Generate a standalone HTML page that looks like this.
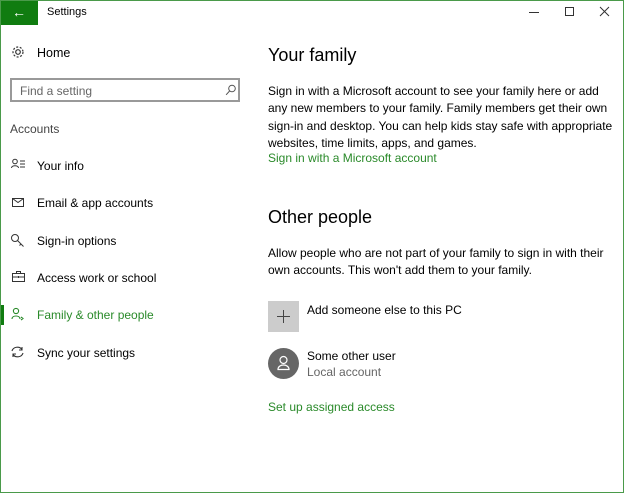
<!DOCTYPE html>
<html><head><meta charset="utf-8"><style>
*{margin:0;padding:0;box-sizing:border-box}
body{width:624px;height:493px;overflow:hidden;background:#fff;font-family:"Liberation Sans",sans-serif;position:relative;color:#000}
.frame{position:absolute;left:0;top:0;width:624px;height:493px;border:1px solid #4a9a4a}
.back{position:absolute;left:0;top:0;width:38px;height:25px;background:#107c10;color:#fff;font-size:14px;text-align:center;line-height:24px}
.title{position:absolute;left:47px;top:6px;font-size:11px}
.t{position:absolute;white-space:nowrap;font-size:12px}
.search{position:absolute;left:10px;top:78px;width:230px;height:24px;border:2px solid #999;}
.search span{position:absolute;left:8px;top:4px;font-size:12px;color:#666}
.green{color:#2a8a2a}
.p{position:absolute;left:268px;font-size:12px;line-height:17.3px;width:350px}
svg{position:absolute}
</style></head><body>
<div class="back">&#8592;</div>
<div class="title">Settings</div>
<svg style="left:520px;top:0" width="100" height="25" fill="none" stroke="#333" stroke-width="1">
<line x1="9" y1="12.5" x2="19" y2="12.5"/>
<rect x="45.5" y="7.5" width="8" height="8"/>
<path d="M80 7l9 9M89 7l-9 9"/>
</svg>

<svg style="left:11px;top:45px" width="16" height="16" fill="none" stroke="#333" stroke-width="1.2"><circle cx="7" cy="7" r="2.3"/><circle cx="7" cy="7" r="5" stroke-dasharray="2 1.6"/></svg>
<div class="t" style="left:37px;top:46px;font-size:12.5px">Home</div>
<div class="search"><span>Find a setting</span></div>
<svg style="left:225px;top:84px" width="12" height="12" fill="none" stroke="#555" stroke-width="1"><circle cx="7" cy="4.5" r="3.3"/><path d="M4.6 7l-3.5 3.8"/></svg>
<div class="t" style="left:10px;top:122px;color:#444">Accounts</div>

<svg style="left:11px;top:158px" width="16" height="12" fill="none" stroke="#333" stroke-width="1"><circle cx="4" cy="3.5" r="2.3"/><path d="M0.5 10c0-3 7-3 7 0"/><path d="M9 3h5M9 6h5M9 9h5"/></svg>
<div class="t" style="left:37px;top:159px">Your info</div>
<svg style="left:11px;top:197px" width="16" height="12" fill="none" stroke="#333" stroke-width="1"><rect x="1.5" y="1.5" width="11" height="8"/><path d="M1.5 1.5l5.5 4 5.5-4"/></svg>
<div class="t" style="left:37px;top:196px">Email &amp; app accounts</div>
<svg style="left:10px;top:233px" width="16" height="16" fill="none" stroke="#333" stroke-width="1"><circle cx="5" cy="5" r="3.5"/><path d="M7.5 7.5l6 6M11 11l-1.5 1.5"/></svg>
<div class="t" style="left:37px;top:234px">Sign-in options</div>
<svg style="left:11px;top:270px" width="16" height="14" fill="none" stroke="#333" stroke-width="1"><rect x="1.5" y="3.5" width="12" height="8"/><path d="M5.5 3.5v-2h4v2M1.5 7h12M7.5 6v2"/></svg>
<div class="t" style="left:37px;top:271px">Access work or school</div>
<div style="position:absolute;left:1px;top:305px;width:3px;height:20px;background:#107c10"></div>
<svg style="left:11px;top:307px" width="16" height="14" fill="none" stroke="#2a8a2a" stroke-width="1.1"><circle cx="5" cy="4" r="2.6"/><path d="M1 12c0-4 8-4 8 0M10 10l2 1.5-2 1.5"/></svg>
<div class="t green" style="left:37px;top:308px">Family &amp; other people</div>
<svg style="left:10px;top:345px" width="16" height="14" fill="none" stroke="#333" stroke-width="1.1"><path d="M2 6a5.5 5 0 0 1 10-1.5M12 2v3h-3M13 8a5.5 5 0 0 1-10 1.5M3 12v-3h3"/></svg>
<div class="t" style="left:37px;top:346px">Sync your settings</div>

<div class="t" style="left:268px;top:45px;font-size:18px">Your family</div>
<div class="p" style="top:83px">Sign in with a Microsoft account to see your family here or add any new members to your family. Family members get their own sign-in and desktop. You can help kids stay safe with appropriate websites, time limits, apps, and games.</div>
<div class="t green" style="left:268px;top:151px">Sign in with a Microsoft account</div>
<div class="t" style="left:268px;top:207px;font-size:18px">Other people</div>
<div class="p" style="top:245px">Allow people who are not part of your family to sign in with their own accounts. This won't add them to your family.</div>
<div style="position:absolute;left:268px;top:301px;width:31px;height:31px;background:#ccc"></div>
<svg style="left:268px;top:301px" width="31" height="31" stroke="#444" stroke-width="1"><path d="M15.5 9v13M9 15.5h13"/></svg>
<div class="t" style="left:307px;top:303px">Add someone else to this PC</div>
<div style="position:absolute;left:268px;top:348px;width:31px;height:31px;border-radius:50%;background:#666"></div>
<svg style="left:268px;top:348px" width="31" height="31" fill="none" stroke="#fff" stroke-width="1.2"><circle cx="15.5" cy="12" r="3.5"/><path d="M10 21.5c0-6 11-6 11 0z"/></svg>
<div class="t" style="left:307px;top:349px">Some other user</div>
<div class="t" style="left:307px;top:365px;color:#666">Local account</div>
<div class="t green" style="left:268px;top:400px">Set up assigned access</div>
<div class="frame"></div>
</body></html>
